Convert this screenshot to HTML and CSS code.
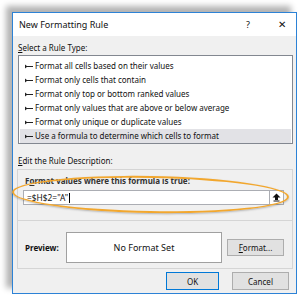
FILE: index.html
```html
<!DOCTYPE html>
<html lang="en">
<head>
    <meta charset="UTF-8">
    <title>New Formatting Rule</title>
    <link rel="stylesheet" href="styles.css">
</head>
<body>
    <div class="dialog">
        <div class="titlebar">
            <span class="title">New Formatting Rule</span>
            <span class="help">?</span>
            <span class="close">&#x2715;</span>
        </div>
        <div class="content">
            <div class="label"><u>S</u>elect a Rule Type:</div>
            <div class="rule-list">
                <div class="rule"><svg class="mark" width="8" height="5" viewBox="0 0 8 5"><path d="M0 0.5 L2.5 2.5 L0 4.5 Z M1 2 H8 V3 H1 Z" fill="#222"/></svg>Format all cells based on their values</div>
                <div class="rule"><svg class="mark" width="8" height="5" viewBox="0 0 8 5"><path d="M0 0.5 L2.5 2.5 L0 4.5 Z M1 2 H8 V3 H1 Z" fill="#222"/></svg>Format only cells that contain</div>
                <div class="rule"><svg class="mark" width="8" height="5" viewBox="0 0 8 5"><path d="M0 0.5 L2.5 2.5 L0 4.5 Z M1 2 H8 V3 H1 Z" fill="#222"/></svg>Format only top or bottom ranked values</div>
                <div class="rule"><svg class="mark" width="8" height="5" viewBox="0 0 8 5"><path d="M0 0.5 L2.5 2.5 L0 4.5 Z M1 2 H8 V3 H1 Z" fill="#222"/></svg>Format only values that are above or below average</div>
                <div class="rule"><svg class="mark" width="8" height="5" viewBox="0 0 8 5"><path d="M0 0.5 L2.5 2.5 L0 4.5 Z M1 2 H8 V3 H1 Z" fill="#222"/></svg>Format only unique or duplicate values</div>
                <div class="rule selected"><svg class="mark" width="8" height="5" viewBox="0 0 8 5"><path d="M0 0.5 L2.5 2.5 L0 4.5 Z M1 2 H8 V3 H1 Z" fill="#222"/></svg>Use a formula to determine which cells to format</div>
            </div>
            <div class="label edit-label"><u>E</u>dit the Rule Description:</div>
            <div class="desc">
                <div class="formula">
                    <div class="formula-label">F<u>o</u>rmat values where this formula is true:</div>
                    <div class="input">
                        <span class="value">=$H$2="A"</span><span class="caret"></span>
                        <span class="pick"><svg width="9" height="9" viewBox="0 0 9 9"><path d="M4.5 0.5 L8.5 4.5 H6 V7 H3 V4.5 H0.5 Z M1.5 7.5 H7.5 V8.5 H1.5 Z" fill="#111"/></svg></span>
                    </div>
                </div>
                <div class="preview-row">
                    <span class="preview-label">Preview:</span>
                    <div class="preview">No Format Set</div>
                    <button class="btn format-btn"><u>F</u>ormat...</button>
                </div>
                <div class="ring"></div>
            </div>
            <div class="actions">
                <button class="btn ok">OK</button>
                <button class="btn">Cancel</button>
            </div>
        </div>
    </div>
</body>
</html>
```

FILE: styles.css
```css
* {
    box-sizing: border-box;
}
body {
    margin: 0;
    width: 300px;
    height: 295px;
    padding: 12px 0 0 12px;
    background: #fff;
    font-family: "Noto Sans", "Open Sans", sans-serif;
    font-size: 8px;
    color: #111;
    overflow: hidden;
}
.dialog {
    width: 285px;
    height: 282px;
    border: 1px solid #2c82d6;
    background: #f0f0f0;
    box-shadow: -6px -6px 6px rgba(0, 0, 0, 0.3);
    display: flex;
    flex-direction: column;
}
.titlebar {
    height: 23px;
    background: #fff;
    display: flex;
    align-items: center;
    padding: 0 10px 0 6px;
    font-size: 9px;
}
.title {
    flex: 1;
}
.help {
    margin-right: 28px;
    font-size: 9px;
}
.close {
    font-size: 9.5px;
}
.content {
    flex: 1;
    padding: 5px 3px 0 4px;
    display: flex;
    flex-direction: column;
}
.label {
    height: 14px;
    line-height: 14px;
    padding-left: 1px;
}
.rule-list {
    margin-left: 1px;
    height: 89px;
    border: 1px solid #828790;
    background: #fff;
    padding: 3px 1px 0 1px;
}
.rule {
    height: 14px;
    line-height: 14px;
    display: flex;
    align-items: center;
    padding-left: 5px;
}
.rule.selected {
    background: #e2e2e6;
}
.mark {
    margin-right: 2px;
}
.edit-label {
    margin-top: 10px;
}
.desc {
    position: relative;
    margin-top: 1px;
    height: 100px;
    border: 1px solid #d5d5d5;
    display: flex;
    flex-direction: column;
}
.formula {
    height: 51px;
    border-bottom: 1px solid #d5d5d5;
    padding: 5px 8px 0 5px;
}
.formula-label {
    height: 12px;
    line-height: 12px;
    font-weight: bold;
    color: #333;
    padding-left: 2px;
}
.input {
    margin-top: 3px;
    height: 15px;
    border: 1px solid #abadb3;
    background: #fff;
    display: flex;
    align-items: center;
    padding-left: 3px;
    font-size: 8.4px;
}
.caret {
    width: 1px;
    height: 10px;
    background: #000;
    margin-left: 1px;
}
.pick {
    margin-left: auto;
    width: 14px;
    height: 13px;
    border-left: 1px solid #abadb3;
    display: flex;
    align-items: center;
    justify-content: center;
}
.preview-row {
    flex: 1;
    display: flex;
    align-items: center;
    padding: 6px 8px 0 7px;
}
.preview-label {
    font-weight: bold;
    width: 41px;
}
.preview {
    width: 156px;
    height: 31px;
    border: 1px solid #a0a0a0;
    background: #fff;
    display: flex;
    align-items: center;
    justify-content: center;
    font-size: 9px;
}
.btn {
    font-family: inherit;
    font-size: 8px;
    color: #111;
    background: #e1e1e1;
    border: 1px solid #adadad;
    padding: 0;
}
.format-btn {
    margin-left: auto;
    width: 57px;
    height: 17px;
}
.ring {
    position: absolute;
    left: -6px;
    top: 6px;
    width: 277px;
    height: 37px;
    border: 2px solid #f2a72e;
    border-radius: 50%;
    transform: rotate(1deg);
    box-shadow: 0 1px 2px rgba(0, 0, 0, 0.25);
}
.actions {
    display: flex;
    justify-content: flex-end;
    gap: 13px;
    padding: 3px 4px 0 0;
}
.actions .btn {
    width: 57px;
    height: 18px;
}
.actions .btn.ok {
    width: 53px;
    border-color: #0078d7;
}
```
